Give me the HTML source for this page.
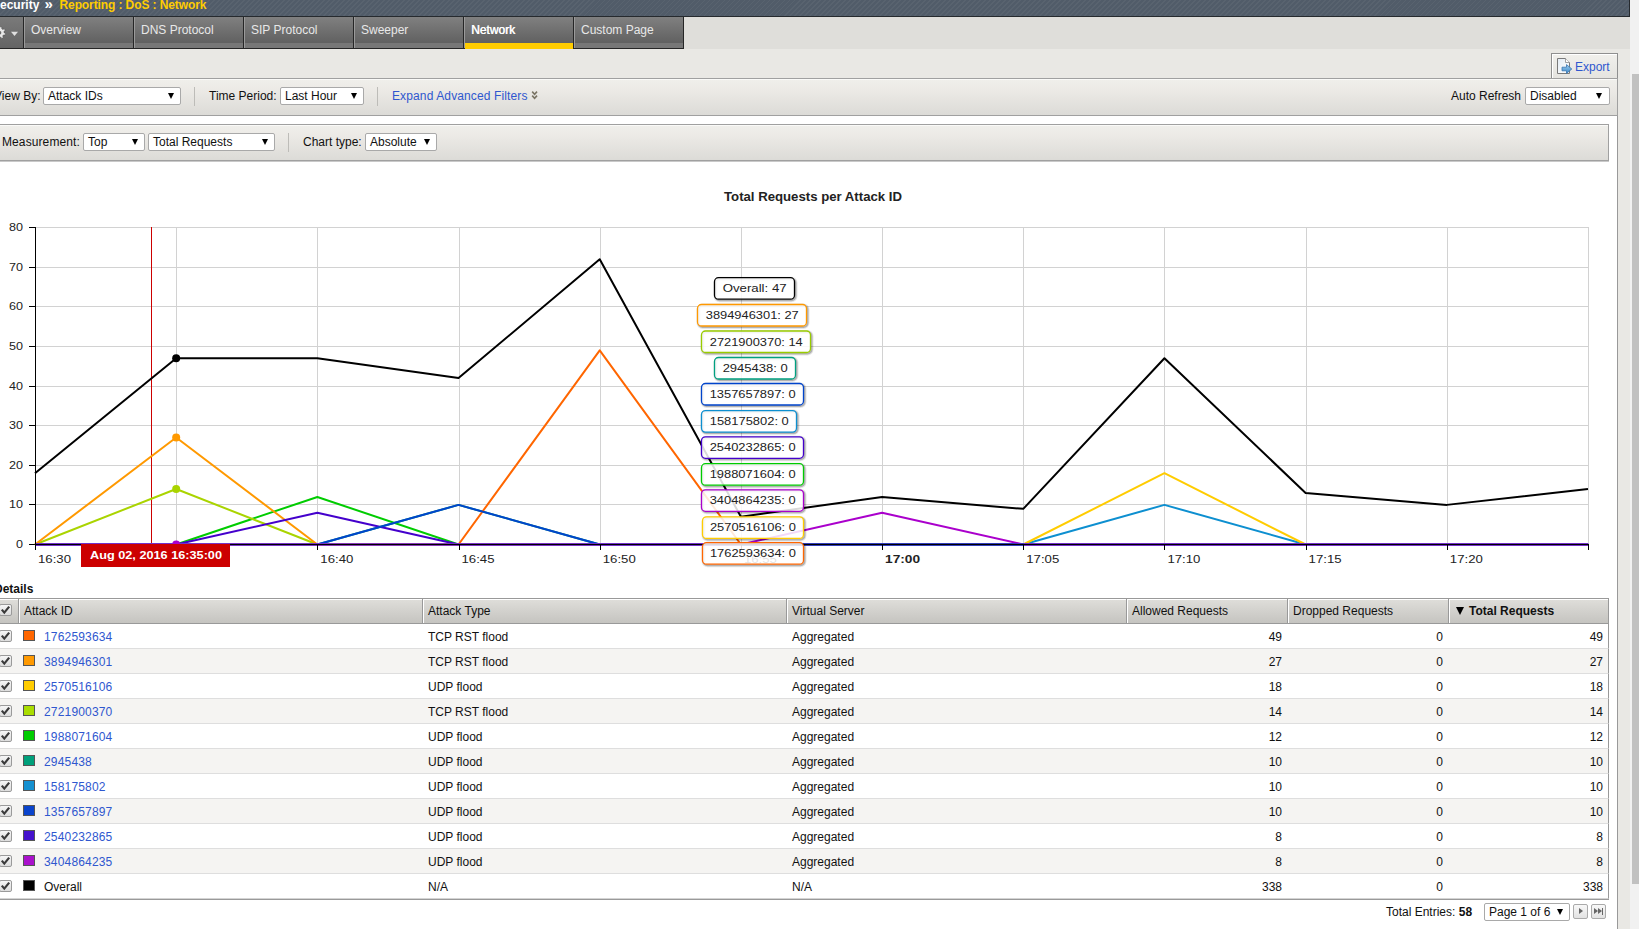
<!DOCTYPE html>
<html><head><meta charset="utf-8">
<style>
*{box-sizing:border-box}
html,body{margin:0;padding:0}
body{width:1639px;height:929px;overflow:hidden;position:relative;background:#e9e8e4;font-family:"Liberation Sans",sans-serif;font-size:12px;color:#111}
.a{position:absolute}
.t{position:absolute;white-space:nowrap;line-height:14px}
#topbar{left:0;top:0;width:1630px;height:17px;background-color:#515c69;background-image:repeating-linear-gradient(135deg,rgba(255,255,255,0) 0px,rgba(255,255,255,0) 2.3px,rgba(255,255,255,.042) 2.3px,rgba(255,255,255,.042) 3.54px);border-bottom:1px solid #262a2e;border-right:1px solid #262a2e}
#tabrow{left:0;top:17px;width:1630px;height:32px;background:#dfdeda}
.tab{position:absolute;top:17px;height:32px;background:linear-gradient(#808080,#606060 85%);border-right:1px solid #262626;border-bottom:1px solid #262626}
.tab .hl{position:absolute;left:0;top:0;width:1px;height:31px;background:#9a9a9a}
.tab .strip{position:absolute;left:1px;right:0;top:26px;height:5px;background:#777}
.tab .lbl{position:absolute;left:7px;top:6px;color:#e8e8e8;font-size:12px;line-height:14px;white-space:nowrap}
.sel{position:absolute;background:#fff;border:1px solid #a9a9a9;border-radius:2px;height:18px}
.sel .st{position:absolute;left:4px;top:1px;line-height:14px;color:#111;white-space:nowrap}
.sel .ar{position:absolute;top:5px;width:0;height:0;border-left:3px solid transparent;border-right:3px solid transparent;border-top:6px solid #000}
.vsep{position:absolute;width:1px;background:#bdbcb8}
.link{color:#2f57cf}
</style><style>
.cb{position:absolute;left:-1px;width:13px;height:12px;border:1px solid #9a9a9a;border-radius:2px;background:linear-gradient(#f6f6f6,#dcdcdc)}
.cb svg{position:absolute;left:0;top:0}
.btn{position:absolute;top:904px;width:15px;height:15px;border:1px solid #aaa;border-radius:2px;background:linear-gradient(#f8f8f8,#e2e2e2)}
.tri{position:absolute;top:2.5px;width:0;height:0;border-top:3.5px solid transparent;border-bottom:3.5px solid transparent;border-left:4px solid #666}
.bar{position:absolute;top:2.5px;width:1.2px;height:7px;background:#666}
</style></head><body>

<!-- top bar -->
<div id="topbar" class="a"></div>
<div class="t" style="left:-8px;top:-2px;font-weight:bold;color:#fff">Security</div><div class="t" style="left:44.5px;top:-3px;font-weight:bold;color:#fff;font-size:15px">»</div>
<div class="t" style="left:59.5px;top:-2px;font-weight:bold;color:#ffcc00;letter-spacing:-.1px">Reporting : DoS : Network</div>

<!-- tabs -->
<div id="tabrow" class="a"></div>
<div class="tab" style="left:0;width:24px;background:linear-gradient(#7a7a7a,#646464)"><svg class="a" style="left:0;top:0" width="23" height="31"><path d="M4.10 15.70 L5.66 16.43 L5.23 18.07 L3.51 17.95 L2.75 18.95 L3.34 20.57 L1.87 21.43 L0.75 20.13 L-0.50 20.30 L-1.23 21.86 L-2.87 21.43 L-2.75 19.71 L-3.75 18.95 L-5.37 19.54 L-6.23 18.07 L-4.93 16.95 L-5.10 15.70 L-6.66 14.97 L-6.23 13.33 L-4.51 13.45 L-3.75 12.45 L-4.34 10.83 L-2.87 9.97 L-1.75 11.27 L-0.50 11.10 L0.23 9.54 L1.87 9.97 L1.75 11.69 L2.75 12.45 L4.37 11.86 L5.23 13.33 L3.93 14.45Z" fill="#e8e8e8" stroke="#444" stroke-width=".5"/><circle cx="-0.5" cy="15.7" r="1.8" fill="#6a6a6a"/><path d="M11 14.8h7l-3.5 4.3z" fill="#e0e0e0"/></svg></div>
<div class="tab" style="left:24px;width:110px"><div class="hl"></div><div class="strip"></div><div class="lbl">Overview</div></div>
<div class="tab" style="left:134px;width:110px"><div class="hl"></div><div class="strip"></div><div class="lbl">DNS Protocol</div></div>
<div class="tab" style="left:244px;width:110px"><div class="hl"></div><div class="strip"></div><div class="lbl">SIP Protocol</div></div>
<div class="tab" style="left:354px;width:110px"><div class="hl"></div><div class="strip"></div><div class="lbl">Sweeper</div></div>
<div class="tab" style="left:464px;width:110px"><div class="hl"></div><div class="strip" style="background:#ffcc00;height:6px"></div><div class="lbl" style="color:#fff;text-shadow:.4px 0 0 #fff">Network</div></div>
<div class="tab" style="left:574px;width:110px"><div class="hl"></div><div class="strip"></div><div class="lbl">Custom Page</div></div>

<!-- export -->
<div class="a" style="left:1551px;top:53px;width:67px;height:26px;border:1px solid #8f8f8f;border-bottom:none;background:linear-gradient(#f1f0ec,#e4e3df);box-shadow:inset 1px 1px 0 #fff"></div>
<div class="t link" style="left:1575px;top:60px">Export</div>
<svg class="a" style="left:1556px;top:57px" width="18" height="18"><defs><linearGradient id="dg" x1="0" y1="0" x2="1" y2="1"><stop offset="0" stop-color="#e4ecf4"/><stop offset="1" stop-color="#ffffff"/></linearGradient><linearGradient id="ag" x1="0" y1="0" x2="0" y2="1"><stop offset="0" stop-color="#9fd0f0"/><stop offset="1" stop-color="#3b86c8"/></linearGradient></defs><path d="M1.5 1.5H9.5L13.5 5.5V16.5H1.5Z" fill="url(#dg)" stroke="#7a7a7a" stroke-width="1" stroke-linejoin="round"/><path d="M9.5 1.5V5.5H13.5" fill="#fff" stroke="#8a8a8a" stroke-width=".8"/><path d="M6 10.2H10.5V7.6L15.8 12L10.5 16.4V13.8H6Z" fill="url(#ag)" stroke="#3573b0" stroke-width=".8" stroke-linejoin="round"/></svg>

<!-- filter bar -->
<div class="a" style="left:-2px;top:78px;width:1620px;height:38px;border:1px solid #a0a0a0;background:linear-gradient(#f0efeb,#eceae6 30%,#dcdbd7);box-shadow:inset 0 1px 0 #fafaf8,0 1px 0 #c9c9c9"></div>
<div class="t" style="left:-6px;top:89px">View By:</div>
<div class="sel" style="left:43px;top:87px;width:138px"><div class="st">Attack IDs</div><div class="ar" style="left:124px"></div></div>
<div class="vsep" style="left:194px;top:87px;height:19px"></div>
<div class="t" style="left:209px;top:89px">Time Period:</div>
<div class="sel" style="left:280px;top:87px;width:84px"><div class="st">Last Hour</div><div class="ar" style="left:70px"></div></div>
<div class="vsep" style="left:377px;top:87px;height:19px"></div>
<div class="t link" style="left:392px;top:89px;letter-spacing:.12px">Expand Advanced Filters</div><svg class="a" style="left:531px;top:90px" width="8" height="10"><path d="M1.2 1.6L3.6 4.2L6 1.6M1.2 5.6L3.6 8.2L6 5.6" stroke="#7a7464" stroke-width="1.6" fill="none"/></svg>
<div class="t" style="left:1451px;top:89px">Auto Refresh</div>
<div class="sel" style="left:1525px;top:87px;width:85px"><div class="st">Disabled</div><div class="ar" style="left:70px"></div></div>

<!-- white panel -->
<div class="a" style="left:-2px;top:116px;width:1620px;height:820px;background:#fff;border-right:1px solid #999"></div>

<!-- measurement bar -->
<div class="a" style="left:-2px;top:124px;width:1611px;height:37px;border:1px solid #a0a0a0;background:linear-gradient(#f0efeb,#eceae6 30%,#dcdbd7);box-shadow:inset 0 1px 0 #fafaf8,0 1px 0 #c9c9c9"></div>
<div class="t" style="left:2px;top:135px;letter-spacing:.1px">Measurement:</div>
<div class="sel" style="left:83px;top:133px;width:62px"><div class="st">Top</div><div class="ar" style="left:48px"></div></div>
<div class="sel" style="left:148px;top:133px;width:127px"><div class="st">Total Requests</div><div class="ar" style="left:113px"></div></div>
<div class="vsep" style="left:288px;top:133px;height:19px"></div>
<div class="t" style="left:303px;top:135px">Chart type:</div>
<div class="sel" style="left:365px;top:133px;width:72px"><div class="st">Absolute</div><div class="ar" style="left:58px"></div></div>

<svg class="a" style="left:0;top:0" width="1639" height="929" viewBox="0 0 1639 929" font-family="Liberation Sans">
<text x="724" y="201" font-size="12" font-weight="bold" fill="#222" textLength="178" lengthAdjust="spacingAndGlyphs">Total Requests per Attack ID</text>
<path d="M36 504.5H1588.5M36 465.5H1588.5M36 425.5H1588.5M36 386.5H1588.5M36 346.5H1588.5M36 306.5H1588.5M36 267.5H1588.5M36 227.5H1588.5M176.5 227V544M317.5 227V544M459.5 227V544M600.5 227V544M741.5 227V544M882.5 227V544M1023.5 227V544M1164.5 227V544M1306.5 227V544M1447.5 227V544M1588.5 227V544" stroke="#d2d2d2" stroke-width="1" fill="none"/>
<path d="M29 544.5H35M29 504.5H35M29 465.5H35M29 425.5H35M29 386.5H35M29 346.5H35M29 306.5H35M29 267.5H35M29 227.5H35" stroke="#000" stroke-width="1" fill="none"/>
<text x="23" y="548" font-size="11" fill="#222" text-anchor="end" textLength="7" lengthAdjust="spacingAndGlyphs">0</text><text x="23" y="508" font-size="11" fill="#222" text-anchor="end" textLength="14" lengthAdjust="spacingAndGlyphs">10</text><text x="23" y="469" font-size="11" fill="#222" text-anchor="end" textLength="14" lengthAdjust="spacingAndGlyphs">20</text><text x="23" y="429" font-size="11" fill="#222" text-anchor="end" textLength="14" lengthAdjust="spacingAndGlyphs">30</text><text x="23" y="390" font-size="11" fill="#222" text-anchor="end" textLength="14" lengthAdjust="spacingAndGlyphs">40</text><text x="23" y="350" font-size="11" fill="#222" text-anchor="end" textLength="14" lengthAdjust="spacingAndGlyphs">50</text><text x="23" y="310" font-size="11" fill="#222" text-anchor="end" textLength="14" lengthAdjust="spacingAndGlyphs">60</text><text x="23" y="271" font-size="11" fill="#222" text-anchor="end" textLength="14" lengthAdjust="spacingAndGlyphs">70</text><text x="23" y="231" font-size="11" fill="#222" text-anchor="end" textLength="14" lengthAdjust="spacingAndGlyphs">80</text>
<path d="M151.5 227V544" stroke="#cc0000" stroke-width="1"/>
<polyline points="35,544.5 176.18,544.5 317.36,544.5 458.54,504.88 599.72,544.5 740.9,544.5 882.08,544.5 1023.26,544.5 1164.44,544.5 1305.62,544.5 1446.8,544.5 1587.98,544.5" fill="none" stroke="#009977" stroke-width="2" stroke-linejoin="round"/>
<polyline points="35,544.5 176.18,544.5 317.36,544.5 458.54,544.5 599.72,544.5 740.9,544.5 882.08,544.5 1023.26,544.5 1164.44,504.88 1305.62,544.5 1446.8,544.5 1587.98,544.5" fill="none" stroke="#0d8fd0" stroke-width="2" stroke-linejoin="round"/>
<polyline points="35,544.5 176.18,544.5 317.36,544.5 458.54,544.5 599.72,544.5 740.9,544.5 882.08,544.5 1023.26,544.5 1164.44,473.18 1305.62,544.5 1446.8,544.5 1587.98,544.5" fill="none" stroke="#ffcc00" stroke-width="2" stroke-linejoin="round"/>
<polyline points="35,544.5 176.18,544.5 317.36,496.95 458.54,544.5 599.72,544.5 740.9,544.5 882.08,544.5 1023.26,544.5 1164.44,544.5 1305.62,544.5 1446.8,544.5 1587.98,544.5" fill="none" stroke="#00cc00" stroke-width="2" stroke-linejoin="round"/>
<polyline points="35,544.5 176.18,489.02 317.36,544.5 458.54,544.5 599.72,544.5 740.9,544.5 882.08,544.5 1023.26,544.5 1164.44,544.5 1305.62,544.5 1446.8,544.5 1587.98,544.5" fill="none" stroke="#aad400" stroke-width="2" stroke-linejoin="round"/>
<polyline points="35,544.5 176.18,437.51 317.36,544.5 458.54,544.5 599.72,544.5 740.9,544.5 882.08,544.5 1023.26,544.5 1164.44,544.5 1305.62,544.5 1446.8,544.5 1587.98,544.5" fill="none" stroke="#ff9900" stroke-width="2" stroke-linejoin="round"/>
<polyline points="35,544.5 176.18,544.5 317.36,544.5 458.54,544.5 599.72,350.34 740.9,544.5 882.08,544.5 1023.26,544.5 1164.44,544.5 1305.62,544.5 1446.8,544.5 1587.98,544.5" fill="none" stroke="#ff6600" stroke-width="2" stroke-linejoin="round"/>
<polyline points="35,544.5 176.18,544.5 317.36,512.8 458.54,544.5 599.72,544.5 740.9,544.5 882.08,544.5 1023.26,544.5 1164.44,544.5 1305.62,544.5 1446.8,544.5 1587.98,544.5" fill="none" stroke="#4400cc" stroke-width="2" stroke-linejoin="round"/>
<polyline points="35,544.5 176.18,544.5 317.36,544.5 458.54,504.88 599.72,544.5 740.9,544.5 882.08,544.5 1023.26,544.5 1164.44,544.5 1305.62,544.5 1446.8,544.5 1587.98,544.5" fill="none" stroke="#0044cc" stroke-width="2" stroke-linejoin="round"/>
<polyline points="35,544.5 176.18,544.5 317.36,544.5 458.54,544.5 599.72,544.5 740.9,544.5 882.08,512.8 1023.26,544.5 1164.44,544.5 1305.62,544.5 1446.8,544.5 1587.98,544.5" fill="none" stroke="#aa00cc" stroke-width="2" stroke-linejoin="round"/>
<polyline points="35,473.18 176.18,358.26 317.36,358.26 458.54,378.08 599.72,259.2 740.9,516.76 882.08,496.95 1023.26,508.84 1164.44,358.26 1305.62,492.99 1446.8,504.88 1587.98,489.02" fill="none" stroke="#000" stroke-width="2" stroke-linejoin="round"/>
<path d="M36 544.5H741.5M1023.9 544.5H1588.5" stroke="#7236d0" stroke-width="2.6" fill="none"/>
<path d="M741.5 544.5H1023.9" stroke="#2c3cc4" stroke-width="2.6" fill="none"/>
<path d="M35.5 227V550M35 544.5H1589" stroke="#000" stroke-width="1" fill="none"/>
<path d="M176.5 544V550M317.5 544V550M459.5 544V550M600.5 544V550M741.5 544V550M882.5 544V550M1023.5 544V550M1164.5 544V550M1306.5 544V550M1447.5 544V550M1588.5 544V550" stroke="#000" stroke-width="1" fill="none"/>
<text x="38" y="563" font-size="11" fill="#222"  textLength="33" lengthAdjust="spacingAndGlyphs">16:30</text>
<text x="320.36" y="563" font-size="11" fill="#222"  textLength="33" lengthAdjust="spacingAndGlyphs">16:40</text>
<text x="461.54" y="563" font-size="11" fill="#222"  textLength="33" lengthAdjust="spacingAndGlyphs">16:45</text>
<text x="602.72" y="563" font-size="11" fill="#222"  textLength="33" lengthAdjust="spacingAndGlyphs">16:50</text>
<text x="743.9" y="563" font-size="11" fill="#444"  textLength="33" lengthAdjust="spacingAndGlyphs">16:55</text>
<text x="885.08" y="563" font-size="11" fill="#222" font-weight="bold" textLength="35" lengthAdjust="spacingAndGlyphs">17:00</text>
<text x="1026.26" y="563" font-size="11" fill="#222"  textLength="33" lengthAdjust="spacingAndGlyphs">17:05</text>
<text x="1167.44" y="563" font-size="11" fill="#222"  textLength="33" lengthAdjust="spacingAndGlyphs">17:10</text>
<text x="1308.62" y="563" font-size="11" fill="#222"  textLength="33" lengthAdjust="spacingAndGlyphs">17:15</text>
<text x="1449.8" y="563" font-size="11" fill="#222"  textLength="33" lengthAdjust="spacingAndGlyphs">17:20</text>
<circle cx="176.18" cy="358.26" r="4" fill="#000"/>
<circle cx="176.18" cy="437.51" r="4" fill="#ff9900"/>
<circle cx="176.18" cy="489.02" r="4" fill="#aad400"/>
<circle cx="176.18" cy="544.5" r="4" fill="#aa00cc"/>
<rect x="81" y="544" width="149" height="23" fill="#cc0000"/>
<text x="90" y="558.5" font-size="11" font-weight="bold" fill="#fff" textLength="132" lengthAdjust="spacingAndGlyphs">Aug 02, 2016 16:35:00</text>
<rect x="714.5" y="277.7" width="80" height="21.5" rx="4" fill="none" stroke="#000" stroke-opacity=".10" stroke-width="4" transform="translate(1,1)"/>
<rect x="714.5" y="277.7" width="80" height="21.5" rx="4" fill="none" stroke="#000" stroke-opacity=".22" stroke-width="2" transform="translate(1,1)"/>
<rect x="714.5" y="277.7" width="80" height="21.5" rx="4" fill="#fff" fill-opacity=".85" stroke="#000000" stroke-width="1.3"/>
<text x="754.65" y="292" font-size="11" fill="#222" text-anchor="middle" textLength="64" lengthAdjust="spacingAndGlyphs">Overall: 47</text>
<rect x="697.5" y="304.5" width="109" height="21.5" rx="4" fill="none" stroke="#000" stroke-opacity=".10" stroke-width="4" transform="translate(1,1)"/>
<rect x="697.5" y="304.5" width="109" height="21.5" rx="4" fill="none" stroke="#000" stroke-opacity=".22" stroke-width="2" transform="translate(1,1)"/>
<rect x="697.5" y="304.5" width="109" height="21.5" rx="4" fill="#fff" fill-opacity=".85" stroke="#ff9900" stroke-width="1.3"/>
<text x="752.25" y="319" font-size="11" fill="#222" text-anchor="middle" textLength="93" lengthAdjust="spacingAndGlyphs">3894946301: 27</text>
<rect x="701.5" y="331" width="109" height="21.5" rx="4" fill="none" stroke="#000" stroke-opacity=".10" stroke-width="4" transform="translate(1,1)"/>
<rect x="701.5" y="331" width="109" height="21.5" rx="4" fill="none" stroke="#000" stroke-opacity=".22" stroke-width="2" transform="translate(1,1)"/>
<rect x="701.5" y="331" width="109" height="21.5" rx="4" fill="#fff" fill-opacity=".85" stroke="#99cc00" stroke-width="1.3"/>
<text x="756.25" y="346" font-size="11" fill="#222" text-anchor="middle" textLength="93" lengthAdjust="spacingAndGlyphs">2721900370: 14</text>
<rect x="714.5" y="357.5" width="81" height="21.5" rx="4" fill="none" stroke="#000" stroke-opacity=".10" stroke-width="4" transform="translate(1,1)"/>
<rect x="714.5" y="357.5" width="81" height="21.5" rx="4" fill="none" stroke="#000" stroke-opacity=".22" stroke-width="2" transform="translate(1,1)"/>
<rect x="714.5" y="357.5" width="81" height="21.5" rx="4" fill="#fff" fill-opacity=".85" stroke="#00a080" stroke-width="1.3"/>
<text x="755.15" y="372" font-size="11" fill="#222" text-anchor="middle" textLength="65" lengthAdjust="spacingAndGlyphs">2945438: 0</text>
<rect x="701.5" y="383.5" width="102" height="21.5" rx="4" fill="none" stroke="#000" stroke-opacity=".10" stroke-width="4" transform="translate(1,1)"/>
<rect x="701.5" y="383.5" width="102" height="21.5" rx="4" fill="none" stroke="#000" stroke-opacity=".22" stroke-width="2" transform="translate(1,1)"/>
<rect x="701.5" y="383.5" width="102" height="21.5" rx="4" fill="#fff" fill-opacity=".85" stroke="#0044cc" stroke-width="1.3"/>
<text x="752.65" y="398" font-size="11" fill="#222" text-anchor="middle" textLength="86" lengthAdjust="spacingAndGlyphs">1357657897: 0</text>
<rect x="701.5" y="410.6" width="95" height="21.5" rx="4" fill="none" stroke="#000" stroke-opacity=".10" stroke-width="4" transform="translate(1,1)"/>
<rect x="701.5" y="410.6" width="95" height="21.5" rx="4" fill="none" stroke="#000" stroke-opacity=".22" stroke-width="2" transform="translate(1,1)"/>
<rect x="701.5" y="410.6" width="95" height="21.5" rx="4" fill="#fff" fill-opacity=".85" stroke="#0d8fd0" stroke-width="1.3"/>
<text x="749.25" y="425" font-size="11" fill="#222" text-anchor="middle" textLength="79" lengthAdjust="spacingAndGlyphs">158175802: 0</text>
<rect x="701.5" y="436.8" width="102" height="21.5" rx="4" fill="none" stroke="#000" stroke-opacity=".10" stroke-width="4" transform="translate(1,1)"/>
<rect x="701.5" y="436.8" width="102" height="21.5" rx="4" fill="none" stroke="#000" stroke-opacity=".22" stroke-width="2" transform="translate(1,1)"/>
<rect x="701.5" y="436.8" width="102" height="21.5" rx="4" fill="#fff" fill-opacity=".85" stroke="#4400cc" stroke-width="1.3"/>
<text x="752.65" y="451" font-size="11" fill="#222" text-anchor="middle" textLength="86" lengthAdjust="spacingAndGlyphs">2540232865: 0</text>
<rect x="701.5" y="463.7" width="102" height="21.5" rx="4" fill="none" stroke="#000" stroke-opacity=".10" stroke-width="4" transform="translate(1,1)"/>
<rect x="701.5" y="463.7" width="102" height="21.5" rx="4" fill="none" stroke="#000" stroke-opacity=".22" stroke-width="2" transform="translate(1,1)"/>
<rect x="701.5" y="463.7" width="102" height="21.5" rx="4" fill="#fff" fill-opacity=".85" stroke="#00cc00" stroke-width="1.3"/>
<text x="752.65" y="478" font-size="11" fill="#222" text-anchor="middle" textLength="86" lengthAdjust="spacingAndGlyphs">1988071604: 0</text>
<rect x="701.5" y="489.8" width="102" height="21.5" rx="4" fill="none" stroke="#000" stroke-opacity=".10" stroke-width="4" transform="translate(1,1)"/>
<rect x="701.5" y="489.8" width="102" height="21.5" rx="4" fill="none" stroke="#000" stroke-opacity=".22" stroke-width="2" transform="translate(1,1)"/>
<rect x="701.5" y="489.8" width="102" height="21.5" rx="4" fill="#fff" fill-opacity=".85" stroke="#aa00cc" stroke-width="1.3"/>
<text x="752.65" y="504" font-size="11" fill="#222" text-anchor="middle" textLength="86" lengthAdjust="spacingAndGlyphs">3404864235: 0</text>
<rect x="702.5" y="516.9" width="101" height="21.5" rx="4" fill="none" stroke="#000" stroke-opacity=".10" stroke-width="4" transform="translate(1,1)"/>
<rect x="702.5" y="516.9" width="101" height="21.5" rx="4" fill="none" stroke="#000" stroke-opacity=".22" stroke-width="2" transform="translate(1,1)"/>
<rect x="702.5" y="516.9" width="101" height="21.5" rx="4" fill="#fff" fill-opacity=".85" stroke="#ffcc00" stroke-width="1.3"/>
<text x="752.9" y="531" font-size="11" fill="#222" text-anchor="middle" textLength="86" lengthAdjust="spacingAndGlyphs">2570516106: 0</text>
<rect x="702.5" y="542.7" width="101" height="21.5" rx="4" fill="none" stroke="#000" stroke-opacity=".10" stroke-width="4" transform="translate(1,1)"/>
<rect x="702.5" y="542.7" width="101" height="21.5" rx="4" fill="none" stroke="#000" stroke-opacity=".22" stroke-width="2" transform="translate(1,1)"/>
<rect x="702.5" y="542.7" width="101" height="21.5" rx="4" fill="#fff" fill-opacity=".85" stroke="#ff6600" stroke-width="1.3"/>
<text x="752.9" y="557" font-size="11" fill="#222" text-anchor="middle" textLength="86" lengthAdjust="spacingAndGlyphs">1762593634: 0</text>
</svg>
<div class="t" style="left:-6px;top:582px;font-weight:bold">Details</div>
<div class="a" style="left:-2px;top:598px;width:1611px;height:26px;border:1px solid #999;border-right:1px solid #999;background:linear-gradient(#dfdeda,#c5c4c0)"></div>
<div class="a" style="left:-1px;top:599px;width:1609px;height:1px;background:#fff"></div>
<div class="a" style="left:18px;top:599px;width:1px;height:24px;background:#999"></div>
<div class="a" style="left:19px;top:599px;width:1px;height:24px;background:#fff"></div>
<div class="a" style="left:422px;top:599px;width:1px;height:24px;background:#999"></div>
<div class="a" style="left:423px;top:599px;width:1px;height:24px;background:#fff"></div>
<div class="a" style="left:786px;top:599px;width:1px;height:24px;background:#999"></div>
<div class="a" style="left:787px;top:599px;width:1px;height:24px;background:#fff"></div>
<div class="a" style="left:1126px;top:599px;width:1px;height:24px;background:#999"></div>
<div class="a" style="left:1127px;top:599px;width:1px;height:24px;background:#fff"></div>
<div class="a" style="left:1287px;top:599px;width:1px;height:24px;background:#999"></div>
<div class="a" style="left:1288px;top:599px;width:1px;height:24px;background:#fff"></div>
<div class="a" style="left:1448px;top:599px;width:1px;height:24px;background:#999"></div>
<div class="a" style="left:1449px;top:599px;width:1px;height:24px;background:#fff"></div>
<div class="cb" style="top:604px"><svg width="11" height="10"><path d="M1.8 4.6L4.3 7.6L9.2 1.6" stroke="#3a3a3a" stroke-width="2.2" fill="none"/></svg></div>
<div class="t" style="left:24px;top:604px">Attack ID</div>
<div class="t" style="left:428px;top:604px">Attack Type</div>
<div class="t" style="left:792px;top:604px">Virtual Server</div>
<div class="t" style="left:1132px;top:604px">Allowed Requests</div>
<div class="t" style="left:1293px;top:604px">Dropped Requests</div>
<div class="a" style="left:1456px;top:607px;width:0;height:0;border-left:4px solid transparent;border-right:4px solid transparent;border-top:8px solid #000"></div>
<div class="t" style="left:1469px;top:604px;font-weight:bold">Total Requests</div>
<div class="a" style="left:-2px;top:624px;width:1611px;height:25px;background:#fff;border-left:1px solid #999;border-right:1px solid #999;border-bottom:1px solid #dedede"></div>
<div class="cb" style="top:630px"><svg width="11" height="10"><path d="M1.8 4.6L4.3 7.6L9.2 1.6" stroke="#3a3a3a" stroke-width="2.2" fill="none"/></svg></div>
<div class="a" style="left:23px;top:630px;width:12px;height:11px;background:#ff6600;border:1px solid #555"></div>
<div class="t link" style="left:44px;top:630px;letter-spacing:.17px">1762593634</div>
<div class="t" style="left:428px;top:630px">TCP RST flood</div>
<div class="t" style="left:792px;top:630px">Aggregated</div>
<div class="t" style="right:357px;top:630px">49</div>
<div class="t" style="right:196px;top:630px">0</div>
<div class="t" style="right:36px;top:630px">49</div>
<div class="a" style="left:-2px;top:649px;width:1611px;height:25px;background:#f5f4f2;border-left:1px solid #999;border-right:1px solid #999;border-bottom:1px solid #dedede"></div>
<div class="cb" style="top:655px"><svg width="11" height="10"><path d="M1.8 4.6L4.3 7.6L9.2 1.6" stroke="#3a3a3a" stroke-width="2.2" fill="none"/></svg></div>
<div class="a" style="left:23px;top:655px;width:12px;height:11px;background:#ff9900;border:1px solid #555"></div>
<div class="t link" style="left:44px;top:655px;letter-spacing:.17px">3894946301</div>
<div class="t" style="left:428px;top:655px">TCP RST flood</div>
<div class="t" style="left:792px;top:655px">Aggregated</div>
<div class="t" style="right:357px;top:655px">27</div>
<div class="t" style="right:196px;top:655px">0</div>
<div class="t" style="right:36px;top:655px">27</div>
<div class="a" style="left:-2px;top:674px;width:1611px;height:25px;background:#fff;border-left:1px solid #999;border-right:1px solid #999;border-bottom:1px solid #dedede"></div>
<div class="cb" style="top:680px"><svg width="11" height="10"><path d="M1.8 4.6L4.3 7.6L9.2 1.6" stroke="#3a3a3a" stroke-width="2.2" fill="none"/></svg></div>
<div class="a" style="left:23px;top:680px;width:12px;height:11px;background:#ffcc00;border:1px solid #555"></div>
<div class="t link" style="left:44px;top:680px;letter-spacing:.17px">2570516106</div>
<div class="t" style="left:428px;top:680px">UDP flood</div>
<div class="t" style="left:792px;top:680px">Aggregated</div>
<div class="t" style="right:357px;top:680px">18</div>
<div class="t" style="right:196px;top:680px">0</div>
<div class="t" style="right:36px;top:680px">18</div>
<div class="a" style="left:-2px;top:699px;width:1611px;height:25px;background:#f5f4f2;border-left:1px solid #999;border-right:1px solid #999;border-bottom:1px solid #dedede"></div>
<div class="cb" style="top:705px"><svg width="11" height="10"><path d="M1.8 4.6L4.3 7.6L9.2 1.6" stroke="#3a3a3a" stroke-width="2.2" fill="none"/></svg></div>
<div class="a" style="left:23px;top:705px;width:12px;height:11px;background:#aadd00;border:1px solid #555"></div>
<div class="t link" style="left:44px;top:705px;letter-spacing:.17px">2721900370</div>
<div class="t" style="left:428px;top:705px">TCP RST flood</div>
<div class="t" style="left:792px;top:705px">Aggregated</div>
<div class="t" style="right:357px;top:705px">14</div>
<div class="t" style="right:196px;top:705px">0</div>
<div class="t" style="right:36px;top:705px">14</div>
<div class="a" style="left:-2px;top:724px;width:1611px;height:25px;background:#fff;border-left:1px solid #999;border-right:1px solid #999;border-bottom:1px solid #dedede"></div>
<div class="cb" style="top:730px"><svg width="11" height="10"><path d="M1.8 4.6L4.3 7.6L9.2 1.6" stroke="#3a3a3a" stroke-width="2.2" fill="none"/></svg></div>
<div class="a" style="left:23px;top:730px;width:12px;height:11px;background:#00cc00;border:1px solid #555"></div>
<div class="t link" style="left:44px;top:730px;letter-spacing:.17px">1988071604</div>
<div class="t" style="left:428px;top:730px">UDP flood</div>
<div class="t" style="left:792px;top:730px">Aggregated</div>
<div class="t" style="right:357px;top:730px">12</div>
<div class="t" style="right:196px;top:730px">0</div>
<div class="t" style="right:36px;top:730px">12</div>
<div class="a" style="left:-2px;top:749px;width:1611px;height:25px;background:#f5f4f2;border-left:1px solid #999;border-right:1px solid #999;border-bottom:1px solid #dedede"></div>
<div class="cb" style="top:755px"><svg width="11" height="10"><path d="M1.8 4.6L4.3 7.6L9.2 1.6" stroke="#3a3a3a" stroke-width="2.2" fill="none"/></svg></div>
<div class="a" style="left:23px;top:755px;width:12px;height:11px;background:#00a07a;border:1px solid #555"></div>
<div class="t link" style="left:44px;top:755px;letter-spacing:.17px">2945438</div>
<div class="t" style="left:428px;top:755px">UDP flood</div>
<div class="t" style="left:792px;top:755px">Aggregated</div>
<div class="t" style="right:357px;top:755px">10</div>
<div class="t" style="right:196px;top:755px">0</div>
<div class="t" style="right:36px;top:755px">10</div>
<div class="a" style="left:-2px;top:774px;width:1611px;height:25px;background:#fff;border-left:1px solid #999;border-right:1px solid #999;border-bottom:1px solid #dedede"></div>
<div class="cb" style="top:780px"><svg width="11" height="10"><path d="M1.8 4.6L4.3 7.6L9.2 1.6" stroke="#3a3a3a" stroke-width="2.2" fill="none"/></svg></div>
<div class="a" style="left:23px;top:780px;width:12px;height:11px;background:#1590d0;border:1px solid #555"></div>
<div class="t link" style="left:44px;top:780px;letter-spacing:.17px">158175802</div>
<div class="t" style="left:428px;top:780px">UDP flood</div>
<div class="t" style="left:792px;top:780px">Aggregated</div>
<div class="t" style="right:357px;top:780px">10</div>
<div class="t" style="right:196px;top:780px">0</div>
<div class="t" style="right:36px;top:780px">10</div>
<div class="a" style="left:-2px;top:799px;width:1611px;height:25px;background:#f5f4f2;border-left:1px solid #999;border-right:1px solid #999;border-bottom:1px solid #dedede"></div>
<div class="cb" style="top:805px"><svg width="11" height="10"><path d="M1.8 4.6L4.3 7.6L9.2 1.6" stroke="#3a3a3a" stroke-width="2.2" fill="none"/></svg></div>
<div class="a" style="left:23px;top:805px;width:12px;height:11px;background:#0a44cc;border:1px solid #555"></div>
<div class="t link" style="left:44px;top:805px;letter-spacing:.17px">1357657897</div>
<div class="t" style="left:428px;top:805px">UDP flood</div>
<div class="t" style="left:792px;top:805px">Aggregated</div>
<div class="t" style="right:357px;top:805px">10</div>
<div class="t" style="right:196px;top:805px">0</div>
<div class="t" style="right:36px;top:805px">10</div>
<div class="a" style="left:-2px;top:824px;width:1611px;height:25px;background:#fff;border-left:1px solid #999;border-right:1px solid #999;border-bottom:1px solid #dedede"></div>
<div class="cb" style="top:830px"><svg width="11" height="10"><path d="M1.8 4.6L4.3 7.6L9.2 1.6" stroke="#3a3a3a" stroke-width="2.2" fill="none"/></svg></div>
<div class="a" style="left:23px;top:830px;width:12px;height:11px;background:#4411cc;border:1px solid #555"></div>
<div class="t link" style="left:44px;top:830px;letter-spacing:.17px">2540232865</div>
<div class="t" style="left:428px;top:830px">UDP flood</div>
<div class="t" style="left:792px;top:830px">Aggregated</div>
<div class="t" style="right:357px;top:830px">8</div>
<div class="t" style="right:196px;top:830px">0</div>
<div class="t" style="right:36px;top:830px">8</div>
<div class="a" style="left:-2px;top:849px;width:1611px;height:25px;background:#f5f4f2;border-left:1px solid #999;border-right:1px solid #999;border-bottom:1px solid #dedede"></div>
<div class="cb" style="top:855px"><svg width="11" height="10"><path d="M1.8 4.6L4.3 7.6L9.2 1.6" stroke="#3a3a3a" stroke-width="2.2" fill="none"/></svg></div>
<div class="a" style="left:23px;top:855px;width:12px;height:11px;background:#aa11cc;border:1px solid #555"></div>
<div class="t link" style="left:44px;top:855px;letter-spacing:.17px">3404864235</div>
<div class="t" style="left:428px;top:855px">UDP flood</div>
<div class="t" style="left:792px;top:855px">Aggregated</div>
<div class="t" style="right:357px;top:855px">8</div>
<div class="t" style="right:196px;top:855px">0</div>
<div class="t" style="right:36px;top:855px">8</div>
<div class="a" style="left:-2px;top:874px;width:1611px;height:25px;background:#fff;border-left:1px solid #999;border-right:1px solid #999;border-bottom:1px solid #d4d4d4"></div>
<div class="cb" style="top:880px"><svg width="11" height="10"><path d="M1.8 4.6L4.3 7.6L9.2 1.6" stroke="#3a3a3a" stroke-width="2.2" fill="none"/></svg></div>
<div class="a" style="left:23px;top:880px;width:12px;height:11px;background:#000000;border:1px solid #555"></div>
<div class="t " style="left:44px;top:880px;letter-spacing:0">Overall</div>
<div class="t" style="left:428px;top:880px">N/A</div>
<div class="t" style="left:792px;top:880px">N/A</div>
<div class="t" style="right:357px;top:880px">338</div>
<div class="t" style="right:196px;top:880px">0</div>
<div class="t" style="right:36px;top:880px">338</div>
<div class="a" style="left:-2px;top:899px;width:1611px;height:1px;background:#9a9a9a"></div>
<div class="t" style="left:1386px;top:905px">Total Entries: <b>58</b></div>
<div class="sel" style="left:1484px;top:903px;width:86px"><div class="st">Page 1 of 6</div><div class="ar" style="left:72px"></div></div>
<div class="btn" style="left:1573px"><div class="tri" style="left:5px"></div></div>
<div class="btn" style="left:1591px"><div class="tri" style="left:1.5px"></div><div class="tri" style="left:5.5px"></div><div class="bar" style="left:9.5px"></div></div>
<!-- scrollbar -->
<div class="a" style="left:1630px;top:0;width:9px;height:929px;background:#f1f1f1"></div>
<div class="a" style="left:1632px;top:74px;width:7px;height:810px;background:#c1c1c1"></div>

</body></html>
